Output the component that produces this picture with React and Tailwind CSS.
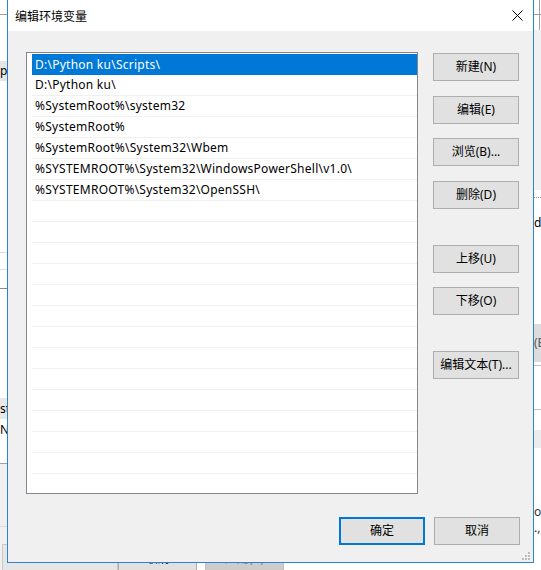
import React from "react";

const PATHS = [
  "D:\\Python ku\\Scripts\\",
  "D:\\Python ku\\",
  "%SystemRoot%\\system32",
  "%SystemRoot%",
  "%SystemRoot%\\System32\\Wbem",
  "%SYSTEMROOT%\\System32\\WindowsPowerShell\\v1.0\\",
  "%SYSTEMROOT%\\System32\\OpenSSH\\",
];

const ROWS = [...PATHS, ...Array(15).fill("")];

function SideButton({ label, className = "" }) {
  return (
    <button
      type="button"
      className={`w-[86px] h-[28px] shrink-0 border border-[#adadad] bg-[#e1e1e1] text-[12px] text-black leading-none flex items-center justify-center ${className}`}
    >
      {label}
    </button>
  );
}

function CloseIcon() {
  return (
    <svg width="11" height="11" viewBox="0 0 11 11" fill="none">
      <path d="M0.5 0.5L10.5 10.5M10.5 0.5L0.5 10.5" stroke="#000" strokeWidth="1" />
    </svg>
  );
}

function Grip() {
  const dots = [
    [6, 0],
    [3, 3], [6, 3],
    [0, 6], [3, 6], [6, 6],
  ];
  return (
    <svg width="8" height="8" viewBox="0 0 8 8">
      {dots.map(([x, y], i) => (
        <rect key={i} x={x} y={y} width="2" height="2" fill="#bdbdbd" />
      ))}
    </svg>
  );
}

// slivers of the settings window that sits behind the dialog
function BehindLeft() {
  return (
    <div className="absolute left-0 top-0 w-[8px] h-[570px] flex flex-col overflow-hidden text-[12px] whitespace-nowrap">
      <div className="h-[14px] shrink-0" />
      <div className="h-px shrink-0 bg-[#a0a0a0]" />
      <div className="h-[46px] shrink-0" />
      <div className="h-[20px] shrink-0 bg-[#e6e6e6] leading-[20px]">p</div>
      <div className="h-[171px] shrink-0" />
      <div className="h-px shrink-0 bg-[#dcdcdc]" />
      <div className="h-[16px] shrink-0" />
      <div className="h-px shrink-0 bg-[#dcdcdc]" />
      <div className="h-[18px] shrink-0" />
      <div className="h-px shrink-0 bg-[#8a8a8a]" />
      <div className="h-[109px] shrink-0" />
      <div className="h-[21px] shrink-0 bg-[#e8e8e8] leading-[21px]">st</div>
      <div className="h-[22px] shrink-0 leading-[22px]">N</div>
      <div className="h-[22px] shrink-0" />
      <div className="flex-1 bg-[#f0f0f0] border-t border-[#a0a0a0] flex flex-col">
        <div className="h-[62px] shrink-0" />
        <div className="h-px shrink-0 bg-[#dcdcdc]" />
      </div>
    </div>
  );
}

function BehindRight() {
  return (
    <div className="absolute left-[534px] top-0 w-[7px] h-[570px] flex flex-col overflow-hidden text-[12px] whitespace-nowrap">
      <div className="h-[14px] shrink-0 w-[6px] border-r border-[#a0a0a0]" />
      <div className="h-px shrink-0 bg-[#a0a0a0]" />
      <div className="h-[15px] shrink-0 w-[6px] border-r border-[#a0a0a0]" />
      <div className="h-[160px] shrink-0 bg-[#f0f0f0]" />
      <div className="h-[7px] shrink-0" />
      <div className="shrink-0 border-t border-dotted border-[#999]" />
      <div className="h-[16px] shrink-0" />
      <div className="h-[18px] shrink-0 leading-[18px]">d</div>
      <div className="h-[92px] shrink-0" />
      <div className="h-[38px] shrink-0 bg-[#dcdcdc] leading-[38px] text-[#555]">(E</div>
      <div className="h-[3px] shrink-0" />
      <div className="h-px shrink-0 bg-[#c0c0c0]" />
      <div className="h-[43px] shrink-0" />
      <div className="h-px shrink-0 bg-[#c0c0c0]" />
      <div className="h-[20px] shrink-0" />
      <div className="h-[18px] shrink-0 bg-[#ececec]" />
      <div className="h-[55px] shrink-0" />
      <div className="h-[18px] shrink-0 leading-[18px] text-[#333]">o</div>
      <div className="h-[14px] shrink-0 leading-[14px] text-[#333]">.,</div>
    </div>
  );
}

function BehindBottom() {
  return (
    <div className="absolute left-0 top-[544px] w-[541px] h-[30px] flex items-start pl-[2px] text-[12px]">
      <div className="w-[116px] h-[30px] border border-[#c8c8c8] bg-[#e6e6e6]" />
      <div className="mt-px w-[79px] h-[28px] border border-[#adadad] bg-[#e1e1e1] flex items-center justify-center">取消</div>
      <div className="mt-px ml-[8px] w-[79px] h-[28px] border border-[#bfbfbf] bg-[#cccccc] flex items-center justify-center text-[#838383]">应用(A)</div>
    </div>
  );
}

export default function App() {
  return (
    <div className="relative w-[541px] h-[570px] overflow-hidden bg-white font-['Segoe_UI','Noto_Sans','Noto_Sans_CJK_SC',sans-serif] text-[12px] text-black">
      <BehindLeft />
      <BehindRight />
      <BehindBottom />

      {/* Dialog */}
      <div className="absolute left-[7px] top-0 w-[527px] h-[563px] border-x border-b border-[#2a84d2] bg-[#f0f0f0] flex flex-col">
        {/* Title bar */}
        <div className="h-[31px] shrink-0 bg-white flex items-center justify-between pl-[7px] pr-[10px]">
          <span className="text-[12px] font-['Noto_Sans_CJK_SC',sans-serif]">编辑环境变量</span>
          <CloseIcon />
        </div>

        {/* Body */}
        <div className="flex-1 pl-[18px] pr-[13px] pt-[21px] flex flex-col">
          <div className="flex gap-[15px]">
            {/* Path list */}
            <div className="w-[392px] h-[442px] border border-[#828790] bg-white pl-[5px] pt-px overflow-hidden tracking-[0.25px]">
              {ROWS.map((p, i) =>
                i === 0 ? (
                  <div key={i} className="h-[21px] bg-[#0078d7] text-white pl-[3px] flex items-center whitespace-nowrap">
                    {p}
                  </div>
                ) : (
                  <div key={i} className="h-[21px] border-b border-[#f0f0f0] pl-[3px] flex items-center whitespace-nowrap">
                    {p}
                  </div>
                )
              )}
            </div>

            {/* Action buttons */}
            <div className="flex flex-col">
              <SideButton label="新建(N)" className="mt-px" />
              <SideButton label="编辑(E)" className="mt-[15px]" />
              <SideButton label="浏览(B)..." className="mt-[14px]" />
              <SideButton label="删除(D)" className="mt-[15px]" />
              <SideButton label="上移(U)" className="mt-[36px]" />
              <SideButton label="下移(O)" className="mt-[14px]" />
              <SideButton label="编辑文本(T)..." className="mt-[36px]" />
            </div>
          </div>

          {/* Footer */}
          <div className="mt-[23px] flex justify-end gap-[9px]">
            <button
              type="button"
              className="w-[86px] h-[28px] border-2 border-[#0078d7] bg-[#e1e1e1] text-[12px] flex items-center justify-center"
            >
              确定
            </button>
            <SideButton label="取消" />
          </div>
        </div>

        <div className="absolute right-[3px] bottom-[2px] leading-none">
          <Grip />
        </div>
      </div>
    </div>
  );
}
